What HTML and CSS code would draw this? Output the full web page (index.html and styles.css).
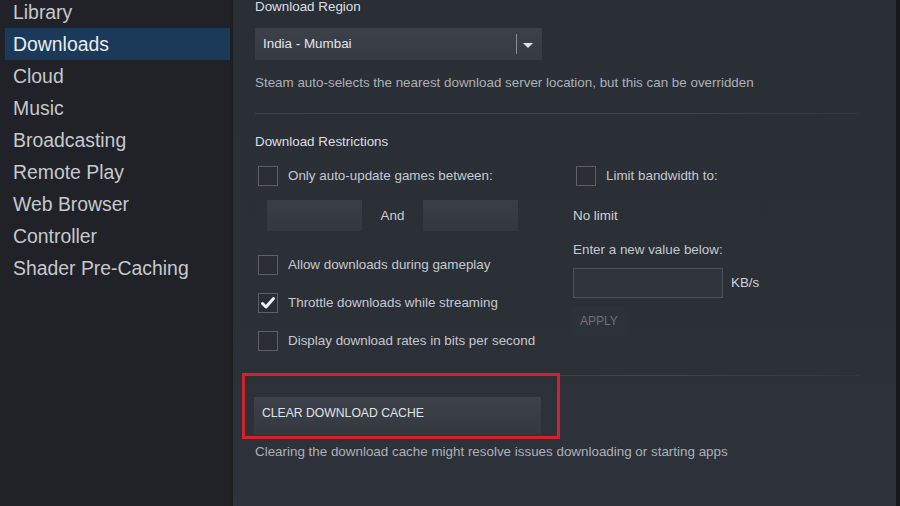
FILE: index.html
```html
<!DOCTYPE html>
<html lang="en">
<head>
    <meta charset="UTF-8">
    <meta name="viewport" content="width=device-width, initial-scale=1.0">
    <title>Settings - Downloads</title>
    <link rel="stylesheet" href="styles.css">
</head>
<body>
    <div class="window">
        <nav class="sidebar">
            <div class="nav-item">Library</div>
            <div class="nav-item active">Downloads</div>
            <div class="nav-item">Cloud</div>
            <div class="nav-item">Music</div>
            <div class="nav-item">Broadcasting</div>
            <div class="nav-item">Remote Play</div>
            <div class="nav-item">Web Browser</div>
            <div class="nav-item">Controller</div>
            <div class="nav-item">Shader Pre-Caching</div>
        </nav>

        <main class="panel">
            <section class="region">
                <div class="label">Download Region</div>
                <div class="select">
                    <span class="select-value">India - Mumbai</span>
                    <span class="select-divider"></span>
                    <span class="select-arrow"></span>
                </div>
                <div class="hint hint-region">Steam auto-selects the nearest download server location, but this can be overridden</div>
            </section>

            <hr class="rule">

            <section class="restrictions">
                <div class="label">Download Restrictions</div>
                <div class="columns">
                    <div class="col-left">
                        <label class="check-row">
                            <span class="checkbox"></span>
                            <span>Only auto-update games between:</span>
                        </label>
                        <div class="time-row">
                            <div class="time-input"></div>
                            <span class="time-and">And</span>
                            <div class="time-input"></div>
                        </div>
                        <div class="check-list">
                            <label class="check-row">
                                <span class="checkbox"></span>
                                <span>Allow downloads during gameplay</span>
                            </label>
                            <label class="check-row">
                                <span class="checkbox checked">
                                    <svg width="20" height="20" viewBox="0 0 20 20">
                                        <path d="M4.5 10.5 L8 14 L15.5 5.5" fill="none" stroke="#f2f2f2" stroke-width="3" stroke-linecap="round" stroke-linejoin="round"/>
                                    </svg>
                                </span>
                                <span>Throttle downloads while streaming</span>
                            </label>
                            <label class="check-row">
                                <span class="checkbox"></span>
                                <span>Display download rates in bits per second</span>
                            </label>
                        </div>
                    </div>

                    <div class="col-right">
                        <label class="check-row">
                            <span class="checkbox"></span>
                            <span>Limit bandwidth to:</span>
                        </label>
                        <div class="limit-value">No limit</div>
                        <div class="limit-prompt">Enter a new value below:</div>
                        <div class="rate-row">
                            <div class="rate-input"></div>
                            <span class="rate-unit">KB/s</span>
                        </div>
                        <button class="apply">APPLY</button>
                    </div>
                </div>
            </section>

            <hr class="rule rule-lower">

            <section class="cache">
                <button class="btn-clear">CLEAR DOWNLOAD CACHE</button>
                <div class="hint hint-cache">Clearing the download cache might resolve issues downloading or starting apps</div>
                <div class="highlight-box"></div>
            </section>
        </main>
    </div>
</body>
</html>
```

FILE: styles.css
```css
* {
    box-sizing: border-box;
}

body {
    margin: 0;
    padding: 0;
    width: 900px;
    height: 506px;
    overflow: hidden;
    background-color: #16181b;
    font-family: "Liberation Sans", Arial, sans-serif;
}

.window {
    display: flex;
    height: 506px;
}

/* left navigation */

.sidebar {
    width: 230px;
    flex-shrink: 0;
    padding-left: 5px;
    background-color: #202228;
}

.nav-item {
    height: 32px;
    line-height: 32px;
    padding-left: 8px;
    font-size: 19.4px;
    color: #c5c9ce;
}

.nav-item:first-child {
    margin-top: -4px;
}

.nav-item.active {
    background-color: #1b3a5a;
    color: #e8ecf0;
}

/* main settings panel */

.panel {
    width: 666px;
    flex-shrink: 0;
    padding: 0 36px 0 22px;
    border-left: 3px solid #1c1e22;
    background: linear-gradient(180deg, #2a2e35 0%, #2b2f36 60%, #2e323a 100%);
    font-size: 13.4px;
    line-height: 16px;
    color: #c5c9cf;
}

.label {
    color: #dcdfe2;
}

.region .label {
    margin-top: -1px;
}

.hint {
    color: #acb1b8;
}

.select {
    display: flex;
    align-items: center;
    width: 287px;
    height: 32px;
    margin-top: 13px;
    background: linear-gradient(180deg, #3c4048 0%, #363a42 100%);
}

.select-value {
    flex: 1;
    padding-left: 8px;
    color: #e2e5e8;
}

.select-divider {
    width: 1px;
    height: 20px;
    background-color: #878c93;
}

.select-arrow {
    width: 0;
    height: 0;
    margin: 2px 9px 0 6px;
    border-left: 5px solid transparent;
    border-right: 5px solid transparent;
    border-top: 5px solid #e0e3e6;
}

.hint-region {
    margin-top: 15px;
}

.rule {
    height: 1px;
    margin: 22px 0 0;
    border: none;
    background: linear-gradient(90deg, #3c4049 0%, #40444d 70%, rgba(64, 68, 77, 0.3) 100%);
}

.restrictions .label {
    margin-top: 20px;
}

.columns {
    display: flex;
    margin-top: 16px;
}

.col-left {
    width: 318px;
}

.col-right {
    flex: 1;
}

.check-row {
    display: flex;
    align-items: center;
    height: 20px;
    padding-left: 3px;
}

.checkbox {
    width: 20px;
    height: 20px;
    margin-right: 10px;
    border: 1px solid #5b6069;
    background-color: #2a2d33;
    flex-shrink: 0;
}

.checkbox svg {
    display: block;
    margin: -1px 0 0 -1px;
}

.time-row {
    display: flex;
    align-items: center;
    margin-top: 14px;
    padding-left: 12px;
}

.time-input {
    width: 95px;
    height: 31px;
    background: linear-gradient(180deg, #3a3e46 0%, #33373e 100%);
}

.time-and {
    width: 61px;
    text-align: center;
    color: #c9cdd2;
}

.check-list {
    display: flex;
    flex-direction: column;
    gap: 18px;
    margin-top: 24px;
}

.limit-value {
    margin-top: 22px;
    color: #cfd2d6;
}

.limit-prompt {
    margin-top: 18px;
}

.rate-row {
    display: flex;
    align-items: center;
    margin-top: 10px;
}

.rate-input {
    width: 150px;
    height: 30px;
    border: 1px solid #4c515a;
    background-color: #30343b;
}

.rate-unit {
    margin-left: 8px;
    color: #d0d3d7;
}

.apply {
    display: block;
    height: 28px;
    margin-top: 9px;
    padding: 0 7px;
    border: none;
    background-color: #2d3138;
    font-family: "Liberation Sans", Arial, sans-serif;
    font-size: 12px;
    color: #6e737b;
}

.rule-lower {
    margin-top: 24px;
}

/* cache section with the red annotation */

.cache {
    position: relative;
    padding-top: 21px;
}

.btn-clear {
    display: block;
    width: 287px;
    height: 38px;
    margin-left: -1px;
    padding: 0 0 6px 8px;
    border: none;
    text-align: left;
    background: linear-gradient(180deg, #3d4149 0%, #34383f 100%);
    font-family: "Liberation Sans", Arial, sans-serif;
    font-size: 12.2px;
    color: #e0e3e6;
}

.hint-cache {
    margin-top: 9px;
}

.highlight-box {
    position: absolute;
    left: -13px;
    top: -3px;
    width: 318px;
    height: 66px;
    border: 3px solid #d2222b;
}
```
